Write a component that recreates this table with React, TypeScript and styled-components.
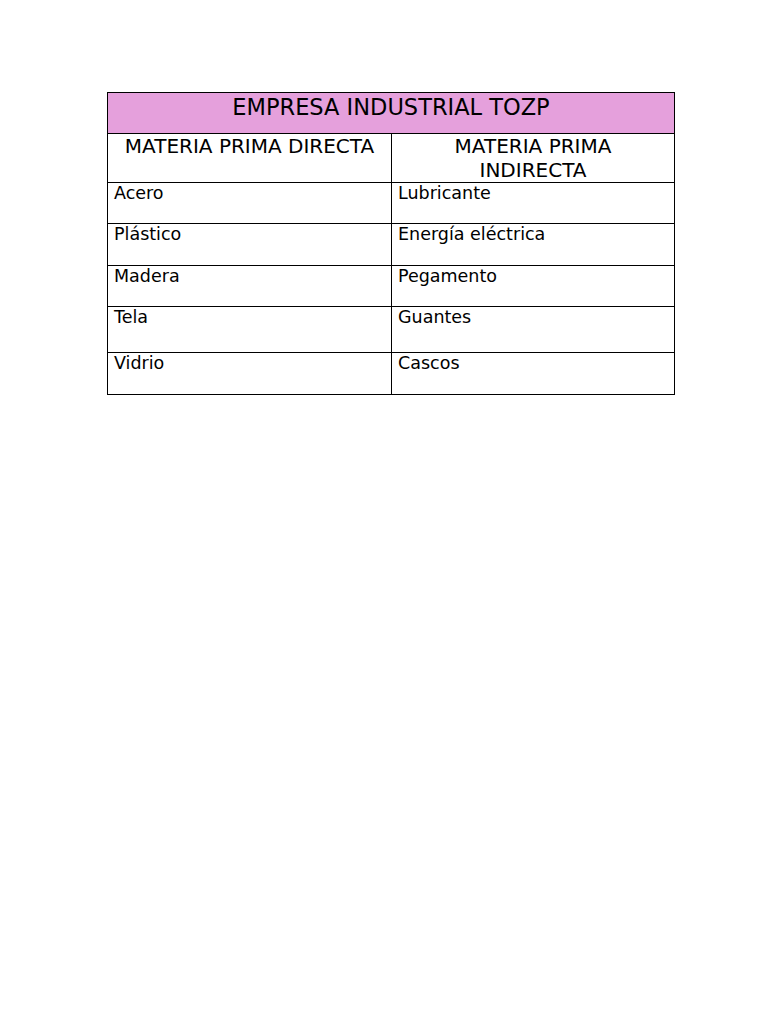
import styled, { createGlobalStyle } from 'styled-components'

const GlobalStyle = createGlobalStyle`
  html, body {
    margin: 0;
    padding: 0;
    background: #ffffff;
  }
  body {
    font-family: "DejaVu Sans", "Liberation Sans", sans-serif;
    color: #000000;
  }
`

const Page = styled.div`
  width: 768px;
  min-height: 1024px;
  padding-top: 92px;
  box-sizing: border-box;
`

const Table = styled.table`
  margin-left: 107px;
  width: 567px;
  border-collapse: collapse;
  table-layout: fixed;
`

const TitleCell = styled.th`
  background: #e5a0dc;
  border: 1px solid #000;
  height: 40px;
  padding: 0;
  font-size: 22.5px;
  font-weight: normal;
  text-align: center;
  vertical-align: top;
  line-height: 28px;
`

const HeadCell = styled.th`
  border: 1px solid #000;
  height: 48px;
  padding: 0 10px;
  font-size: 20px;
  font-weight: normal;
  text-align: center;
  vertical-align: top;
  line-height: 24px;
`

const Cell = styled.td<{ $h: number }>`
  border: 1px solid #000;
  height: ${(p) => p.$h}px;
  padding: 0 6px;
  font-size: 17.5px;
  text-align: left;
  vertical-align: top;
  line-height: 20px;
  box-sizing: border-box;
`

const rows = [
  { left: 'Acero', right: 'Lubricante', h: 41 },
  { left: 'Plástico', right: 'Energía eléctrica', h: 42 },
  { left: 'Madera', right: 'Pegamento', h: 41 },
  { left: 'Tela', right: 'Guantes', h: 46 },
  { left: 'Vidrio', right: 'Cascos', h: 42 },
]

function App() {
  return (
    <Page>
      <GlobalStyle />
      <Table>
        <colgroup>
          <col style={{ width: 284 }} />
          <col style={{ width: 283 }} />
        </colgroup>
        <thead>
          <tr>
            <TitleCell colSpan={2}>EMPRESA INDUSTRIAL TOZP</TitleCell>
          </tr>
          <tr>
            <HeadCell>MATERIA PRIMA DIRECTA</HeadCell>
            <HeadCell>MATERIA PRIMA INDIRECTA</HeadCell>
          </tr>
        </thead>
        <tbody>
          {rows.map((r) => (
            <tr key={r.left}>
              <Cell $h={r.h}>{r.left}</Cell>
              <Cell $h={r.h}>{r.right}</Cell>
            </tr>
          ))}
        </tbody>
      </Table>
    </Page>
  )
}

export default App
